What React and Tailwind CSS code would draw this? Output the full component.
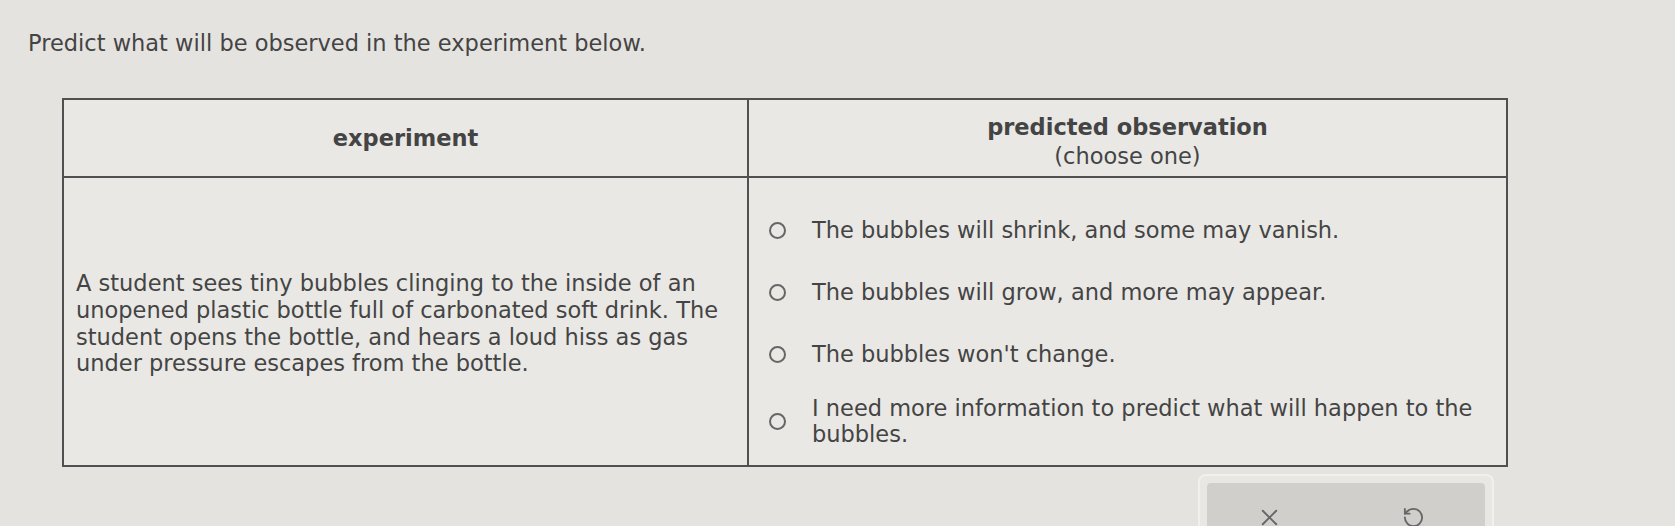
import { RotateCcw, X } from 'lucide-react'

// ─── Prediction question ──────────────────────────────────────────────────────

const OPTIONS = [
  'The bubbles will shrink, and some may vanish.',
  'The bubbles will grow, and more may appear.',
  "The bubbles won't change.",
  'I need more information to predict what will happen to the bubbles.',
]

function Radio() {
  return <span className="h-[17px] w-[17px] flex-shrink-0 rounded-full border-2 border-[#666]" />
}

export default function App() {
  return (
    <div
      className="h-[526px] w-[1675px] overflow-hidden bg-[#e4e3e0] text-[#444]"
      style={{ fontFamily: '"DejaVu Sans", Verdana, sans-serif' }}
    >
      {/* Prompt */}
      <p className="pl-[28px] pt-[29px] text-[22.5px] leading-[28px]">
        Predict what will be observed in the experiment below.
      </p>

      {/* Table */}
      <div className="ml-[62px] mt-[41px] w-[1446px] border-2 border-[#505050] bg-[#e9e8e5]">
        {/* Header row */}
        <div className="flex h-[78px] border-b-2 border-[#505050]">
          <div className="flex w-[685px] items-center justify-center border-r-2 border-[#505050] pt-[2px] text-[22.5px] font-bold">
            experiment
          </div>
          <div className="flex flex-1 flex-col items-center justify-center pt-[8px] text-[22.5px] leading-[29px]">
            <span className="font-bold">predicted observation</span>
            <span>(choose one)</span>
          </div>
        </div>

        {/* Body row */}
        <div className="flex h-[287px]">
          <div className="flex w-[685px] items-center border-r-2 border-[#505050] pl-[12px] pr-[8px] pt-[4px] text-[22.5px] leading-[26.7px]">
            <p>
              A student sees tiny bubbles clinging to the inside of an unopened plastic bottle full of carbonated
              soft drink. The student opens the bottle, and hears a loud hiss as gas under pressure escapes from the
              bottle.
            </p>
          </div>
          <div className="flex flex-1 flex-col pl-[20px] pr-[20px] pt-[39px] text-[22.5px] leading-[26px]">
            {OPTIONS.map((o, i) => (
              <label
                key={o}
                className={`flex items-center gap-[26px] ${i === 0 ? '' : i === 3 ? 'mt-[28px]' : 'mt-[36px]'}`}
              >
                <Radio />
                <span className="max-w-[680px]">{o}</span>
              </label>
            ))}
          </div>
        </div>
      </div>

      {/* Action buttons */}
      <div className="ml-[1198px] mt-[7px] w-[296px] rounded-t-[8px] border-2 border-b-0 border-[#f1f0ed] bg-[#e8e7e4] px-[7px] pt-[7px]">
        <div className="flex h-[60px] items-center justify-between rounded-t-[4px] bg-[#d0cfcc] pl-[49px] pr-[60px] pt-[8px] text-[#666]">
          <X size={27} strokeWidth={1.7} />
          <RotateCcw size={23} strokeWidth={1.9} />
        </div>
      </div>
    </div>
  )
}
